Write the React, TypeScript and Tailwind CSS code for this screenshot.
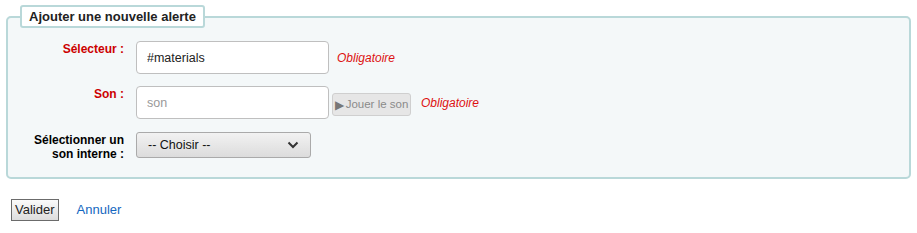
import React from "react";

export default function App() {
  return (
    <div className="w-[917px] h-[233px] bg-white font-['Liberation_Sans',Arial,sans-serif] text-[12px] text-black">
      <div className="pt-[5px] px-[6px]">
        <fieldset className="border-2 border-[#b9d8d9] rounded-[5px] bg-[#f4f8f9] pb-[16px]">
          <legend className="ml-[12px] bg-white border-2 border-[#b9d8d9] rounded-[3px] px-[7px] h-[23px] leading-[19px] text-[13px] font-bold text-[#222]">
            Ajouter une nouvelle alerte
          </legend>
          <div className="mt-[13px] flex flex-col">
            <div className="flex items-start">
              <label className="w-[116px] text-right font-bold text-[#cc0000] leading-[14px] pt-[1px]">Sélecteur :</label>
              <input
                defaultValue="#materials"
                className="ml-[12px] w-[193px] h-[33px] bg-white border border-[#bfbfbf] rounded-[4px] px-[10px] text-[12.5px] text-[#222] outline-none"
              />
              <span className="ml-[8px] self-center italic text-[#dd1111]">Obligatoire</span>
            </div>
            <div className="flex items-start mt-[12px]">
              <label className="w-[116px] text-right font-bold text-[#cc0000] leading-[14px] pt-[1px]">Son :</label>
              <input
                placeholder="son"
                className="ml-[12px] w-[193px] h-[33px] bg-white border border-[#bfbfbf] rounded-[4px] px-[10px] text-[12.5px] text-[#222] placeholder:text-[#999] outline-none"
              />
              <button
                disabled
                className="ml-[3px] mt-[7px] w-[79px] h-[23px] bg-[#e6e6e6] border border-[#cfcfcf] rounded-[3px] text-[11.5px] text-[#8a8a8a] flex items-center justify-center"
              >
                <span className="text-[12px] mr-[2px] text-[#777]">▶</span>Jouer le son
              </button>
              <span className="ml-[10px] self-center italic text-[#dd1111]">Obligatoire</span>
            </div>
            <div className="flex items-start mt-[13px]">
              <label className="w-[116px] text-right font-bold leading-[14px] pt-[1px]">
                Sélectionner un
                <br />
                son interne :
              </label>
              <div className="ml-[12px] w-[175px] h-[26px] border border-[#aaaaaa] rounded-[3px] bg-gradient-to-b from-[#f2f2f2] to-[#dcdcdc] flex items-center justify-between pl-[11px] pr-[11px] text-[12.5px] text-[#111]">
                <span>-- Choisir --</span>
                <svg width="12" height="8" viewBox="0 0 12 8" className="text-[#333]">
                  <path d="M1.5 1.5 L6 6 L10.5 1.5" fill="none" stroke="currentColor" strokeWidth="2" />
                </svg>
              </div>
            </div>
          </div>
        </fieldset>
      </div>
      <div className="flex items-center mt-[20px] ml-[11px]">
        <button className="h-[22px] px-[3px] border border-[#6b6b6b] bg-gradient-to-b from-[#fafafa] to-[#dddddd] text-[13px] text-[#222] leading-[20px]">
          Valider
        </button>
        <a href="#" className="ml-[18px] text-[13px] text-[#1467c0]">Annuler</a>
      </div>
    </div>
  );
}
